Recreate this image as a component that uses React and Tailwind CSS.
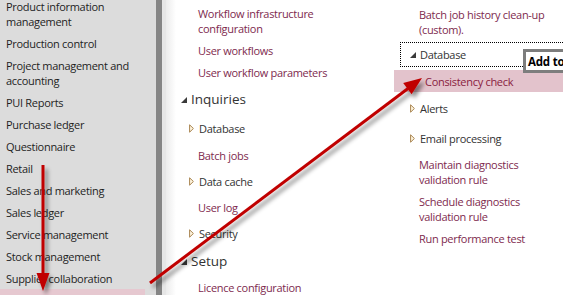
import React from "react";

const LINK = "text-[#7e2a4e]";

function Expanded({ className = "" }) {
  return (
    <svg width="6" height="6" viewBox="0 0 6 6" className={className}>
      <polygon points="6,0 6,6 0,6" fill="#3a3a3a" />
    </svg>
  );
}

function Collapsed({ className = "" }) {
  return (
    <svg width="5" height="9" viewBox="0 0 5 9" className={className}>
      <polygon points="0.6,0.8 4.4,4.5 0.6,8.2" fill="#fff6e0" stroke="#a88450" strokeWidth="1" />
    </svg>
  );
}

const leftItems = [
  ["Product information", "management"],
  ["Production control"],
  ["Project management and", "accounting"],
  ["PUI Reports"],
  ["Purchase ledger"],
  ["Questionnaire"],
  ["Retail"],
  ["Sales and marketing"],
  ["Sales ledger"],
  ["Service management"],
  ["Stock management"],
  ["Supplier collaboration"],
];

const row = "shrink-0 flex items-center";

export default function App() {
  return (
    <div
      className="relative w-[563px] h-[295px] overflow-hidden bg-white flex text-[11px] leading-[15px] tracking-[-0.3px]"
      style={{ fontFamily: '"Open Sans", "Noto Sans", sans-serif' }}
    >
      {/* Left panel */}
      <div className="w-[156px] shrink-0 bg-[#dcdcdc] flex flex-col pl-[6px] -mt-[5px] text-[#1e1e1e]">
        {leftItems.map((it, i) => (
          <div
            key={i}
            className={`shrink-0 flex flex-col justify-center ${it.length > 1 ? "h-[37px]" : "h-[22px]"}`}
          >
            {it.map((l, j) => (
              <span key={j}>{l}</span>
            ))}
          </div>
        ))}
        <div className="shrink-0 h-[10px] -ml-[6px] mr-[11px] bg-[#e6c8d0]" />
      </div>
      <div className="w-[6px] shrink-0 bg-[#858585]" />
      <div className="w-[4px] shrink-0 bg-[#e6e6e6]" />
      <div className="w-[10px] shrink-0 bg-gradient-to-r from-[#ececec] to-white" />

      {/* Middle column */}
      <div className="w-[218px] shrink-0 flex flex-col pt-[2px]">
        <div className={`shrink-0 h-[37px] flex flex-col justify-center pl-[22px] ${LINK}`}>
          <span>Workflow infrastructure</span>
          <span>configuration</span>
        </div>
        <div className={`${row} h-[22px] pl-[22px] ${LINK}`}>User workflows</div>
        <div className={`${row} h-[22px] pl-[22px] ${LINK}`}>User workflow parameters</div>
        <div className={`${row} h-[32px] pl-[5px] text-[#333] text-[13.5px] tracking-normal`}>
          <Expanded className="mr-[4px] mt-[2px]" />
          Inquiries
        </div>
        <div className={`${row} h-[27px] pl-[13px] text-[#333]`}>
          <Collapsed className="mr-[5px]" />
          Database
        </div>
        <div className={`${row} h-[26px] pl-[22px] ${LINK}`}>Batch jobs</div>
        <div className={`${row} h-[26px] pl-[13px] text-[#333]`}>
          <Collapsed className="mr-[5px]" />
          Data cache
        </div>
        <div className={`${row} h-[26px] pl-[22px] ${LINK}`}>User log</div>
        <div className={`${row} h-[26px] pl-[13px] text-[#333]`}>
          <Collapsed className="mr-[5px]" />
          Security
        </div>
        <div className={`${row} h-[30px] pl-[5px] text-[#333] text-[13.5px] tracking-normal`}>
          <Expanded className="mr-[4px] mt-[2px]" />
          Setup
        </div>
        <div className={`${row} h-[22px] pl-[22px] ${LINK}`}>Licence configuration</div>
      </div>

      {/* Right column */}
      <div className="flex-1 flex flex-col pt-[3px] min-w-0">
        <div className={`shrink-0 h-[37px] flex flex-col justify-center pl-[25px] ${LINK}`}>
          <span>Batch job history clean-up</span>
          <span>(custom).</span>
        </div>
        <div className="shrink-0 mt-[2px] ml-[6px] -mr-[20px] h-[25px] border border-dotted border-black flex items-center pl-[9px] text-[#333]">
          <Expanded className="mr-[4px]" />
          Database
        </div>
        <div className={`${row} mt-[3px] h-[22px] bg-[#e3c3cc] pl-[31px] text-[#8a1c40]`}>
          Consistency check
        </div>
        <div className={`${row} h-[32px] pl-[16px] text-[#333]`}>
          <Collapsed className="mr-[5px]" />
          Alerts
        </div>
        <div className={`${row} h-[28px] pl-[16px] text-[#333]`}>
          <Collapsed className="mr-[5px]" />
          Email processing
        </div>
        <div className={`shrink-0 h-[39px] flex flex-col justify-center pl-[25px] ${LINK}`}>
          <span>Maintain diagnostics</span>
          <span>validation rule</span>
        </div>
        <div className={`shrink-0 h-[35px] flex flex-col justify-center pl-[25px] ${LINK}`}>
          <span>Schedule diagnostics</span>
          <span>validation rule</span>
        </div>
        <div className={`${row} h-[24px] pl-[25px] ${LINK}`}>Run performance test</div>
      </div>

      {/* Tooltip */}
      <div className="absolute left-[523px] top-[49px] h-[24px] w-[60px] border-[3px] border-[#7d7d7d] bg-white flex items-center pl-[2px] font-bold text-[11.5px] tracking-[-0.2px] text-black whitespace-nowrap">
        Add to
      </div>

      {/* Arrows overlay */}
      <svg className="absolute inset-0 pointer-events-none" width="563" height="295" viewBox="0 0 563 295">
        <defs>
          <filter id="sh" x="-20%" y="-20%" width="140%" height="140%">
            <feDropShadow dx="3" dy="4" stdDeviation="2" floodColor="#000" floodOpacity="0.45" />
          </filter>
        </defs>
        <g filter="url(#sh)">
          <line x1="43" y1="165" x2="43" y2="274" stroke="#c00000" strokeWidth="3" />
          <polygon points="36.5,273 49.5,273 43,291" fill="#c00000" />
          <line x1="150" y1="283" x2="408" y2="88.5" stroke="#c00000" strokeWidth="3" />
          <polygon points="422,78 403.2,83 411.6,94.2" fill="#c00000" />
        </g>
      </svg>
    </div>
  );
}
